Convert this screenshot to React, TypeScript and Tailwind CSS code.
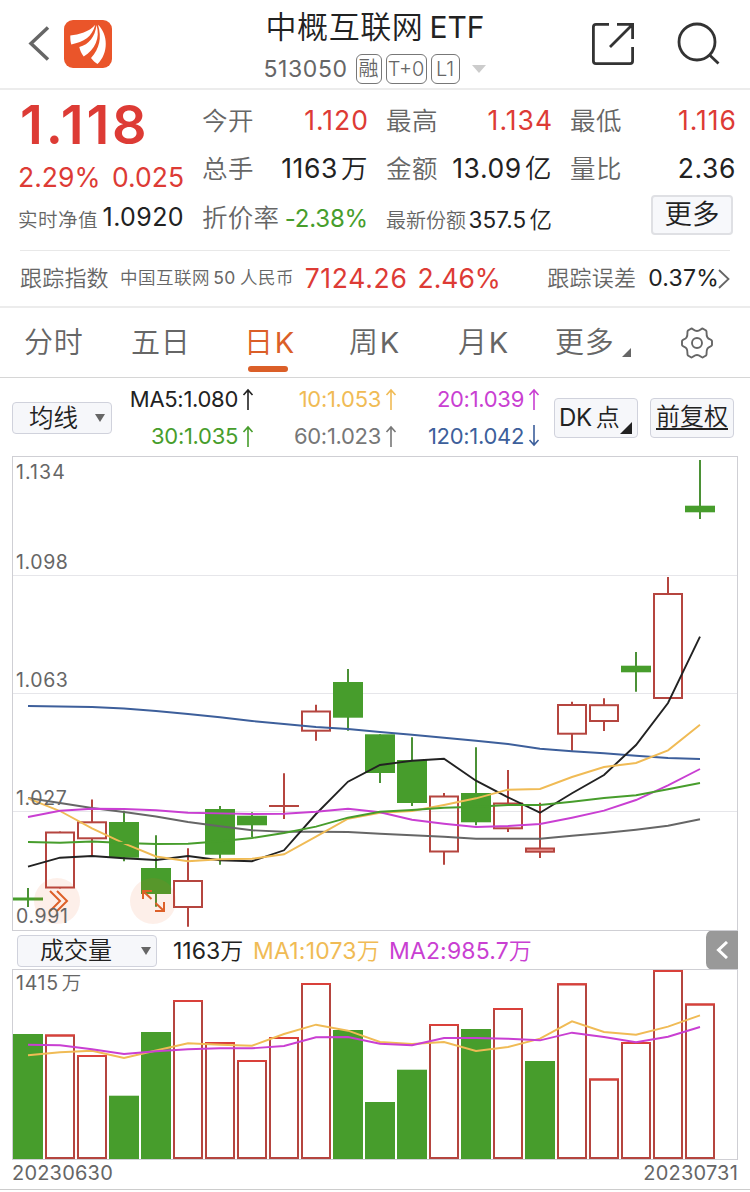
import type { ReactNode } from "react";
import clsx from "clsx";

const RED = "#b5453f";
const GREEN = "#479d2c";

const STEP = 32;
const FIRST_X = 28;
const BAR = 30;

const cx = (i: number) => FIRST_X + i * STEP;

type Candle = { up: boolean; high: number; top: number; bottom: number; low: number };

const k = (up: boolean, high: number, top: number, bottom: number, low: number): Candle => ({ up, high, top, bottom, low });

const candles: Candle[] = [
  k(false, 888, 897.5, 900.5, 907),
  k(true, 831.5, 831.5, 888.5, 888.5),
  k(true, 799.5, 821.3, 839.3, 856),
  k(false, 810.7, 822, 857.7, 861.3),
  k(false, 835.3, 868, 894, 906.7),
  k(true, 848.3, 880, 908, 926.7),
  k(false, 806, 809, 854.7, 864.7),
  k(false, 812.3, 815.7, 825.3, 837.3),
  k(true, 773.3, 805, 807, 819),
  k(true, 704.7, 710.5, 731.7, 740.7),
  k(false, 669, 682, 717.7, 730.7),
  k(false, 734.3, 734.3, 773, 783),
  k(false, 737.3, 760, 803, 806),
  k(true, 793, 795.5, 852.5, 864.7),
  k(false, 747.3, 793, 822.3, 825.3),
  k(true, 770, 802.5, 829.3, 832),
  k(true, 802.7, 847.5, 852.7, 858),
  k(true, 701.7, 704, 734.7, 750.7),
  k(true, 698.3, 704.2, 722, 731),
  k(false, 652, 665.7, 672.3, 691.7),
  k(true, 577, 593, 699, 699),
  k(false, 460, 505.7, 512.3, 519),
];

const averages = [
  { color: "#666666", ys: [798, 803, 808, 812, 816.5, 822, 826.3, 830.3, 831.7, 831.7, 832, 833.7, 835.3, 836.7, 838.7, 838.7, 838.7, 835.7, 833, 829.7, 825.7, 819.3] },
  { color: "#3d5f9b", ys: [706, 706.5, 707, 708.5, 711, 714, 717.3, 721, 724, 727, 729, 732, 734.7, 737.7, 740.7, 744, 748.7, 751.3, 753.3, 755.7, 758, 759] },
  { color: "#222222", ys: [866.7, 857.7, 856, 858.3, 860, 856, 860.3, 861.2, 850.3, 814, 781.7, 765, 760.7, 758.7, 780.7, 797.3, 812.7, 793.3, 775, 745, 703, 636.7] },
  { color: "#f0bb55", ys: [798.3, 811, 828.3, 843.3, 856.5, 861.3, 859.3, 858.8, 854.3, 836.7, 818.7, 812.7, 811, 805, 798.3, 789.7, 789, 777, 767, 763, 750.3, 724.7] },
  { color: "#c93fd2", ys: [817, 810.7, 808.7, 809, 810.3, 812.7, 813.4, 814, 813.7, 811.7, 808.7, 812.3, 819.7, 823.7, 827, 826, 824, 817.7, 810.7, 800, 785.3, 769] },
  { color: "#479d2c", ys: [842, 842.7, 841.5, 843, 844, 843.7, 841.3, 838, 833, 826.7, 817.7, 811.7, 810, 807.7, 806.7, 805, 805, 801.7, 798, 795.3, 789.3, 783] },
];

const volumes = [
  { up: false, top: 1034 }, { up: true, top: 1034.5 }, { up: true, top: 1055 }, { up: false, top: 1095.7 },
  { up: false, top: 1032 }, { up: true, top: 1000 }, { up: true, top: 1042 }, { up: true, top: 1060 },
  { up: true, top: 1037 }, { up: true, top: 983 }, { up: false, top: 1030 }, { up: false, top: 1102 },
  { up: false, top: 1069.7 }, { up: true, top: 1024 }, { up: false, top: 1029 }, { up: true, top: 1008 },
  { up: false, top: 1061 }, { up: true, top: 983.3 }, { up: true, top: 1078.5 }, { up: true, top: 1042 },
  { up: true, top: 970 }, { up: true, top: 1003.5 },
];

const volumeAverages = [
  { color: "#f0bb55", ys: [1055.3, 1052.3, 1050.7, 1058, 1050.5, 1043.3, 1044.7, 1045.7, 1034, 1024.7, 1030.7, 1042, 1044, 1042, 1051, 1047, 1038.7, 1021.3, 1032, 1034.7, 1026.7, 1015.3] },
  { color: "#c93fd2", ys: [1044.7, 1045.3, 1049.3, 1054, 1051.3, 1049.3, 1048.3, 1048.3, 1046, 1037.3, 1037, 1043.7, 1045.3, 1038, 1038, 1038.7, 1040.3, 1032.7, 1037, 1042.3, 1036.7, 1027] },
];

const Lines = ({ series }: { series: { color: string; ys: number[] }[] }) => (
  <>
    {series.map((s, n) => (
      <polyline key={n} fill="none" stroke={s.color} strokeWidth="1.9" points={s.ys.map((y, i) => `${cx(i)},${y}`).join(" ")} />
    ))}
  </>
);

const PriceChart = () => (
  <svg className="block h-[475px] w-[726px]" viewBox="12 456 726 475">
    <g stroke="#e6e6ea" strokeWidth="1">
      <line x1="13" x2="737" y1="575.5" y2="575.5" />
      <line x1="13" x2="737" y1="693.5" y2="693.5" />
      <line x1="13" x2="737" y1="811.5" y2="811.5" />
    </g>
    {candles.map((c, i) =>
      c.up ? (
        <g key={i} stroke={RED} strokeWidth="2">
          <line x1={cx(i)} x2={cx(i)} y1={c.high} y2={c.top + 1} />
          <line x1={cx(i)} x2={cx(i)} y1={c.bottom - 1} y2={c.low} />
          {c.bottom - c.top > 3 ? (
            <rect x={cx(i) - 14} y={c.top + 1} width={BAR - 2} height={c.bottom - c.top - 2} fill={c.bottom - c.top < 8 ? "#f6a5a0" : "none"} />
          ) : (
            <line x1={cx(i) - 15} x2={cx(i) + 15} y1={c.top + 1} y2={c.top + 1} />
          )}
        </g>
      ) : (
        <g key={i}>
          <line x1={cx(i)} x2={cx(i)} y1={c.high} y2={c.low} stroke="#4b9136" strokeWidth="2" />
          <rect x={cx(i) - 15} y={c.top} width={BAR} height={c.bottom - c.top} fill={GREEN} />
        </g>
      )
    )}
    <Lines series={averages} />
    <circle cx="57" cy="901" r="23" fill="#e8662c" fillOpacity="0.1" />
    <circle cx="153" cy="901" r="23" fill="#e8662c" fillOpacity="0.1" />
    <g fill="none" stroke="#dd6029" strokeWidth="2">
      <path d="M50 891l10 10-10 10M57 891l10 10-10 10" />
      <path d="M143 899v-8h9M143.500 891.500l8 7.500M164 902v9h-9M163.500 910.500l-8-7.500" />
    </g>
    <rect x="12.500" y="456.500" width="725" height="474" fill="none" stroke="#cfcfd4" />
  </svg>
);

const VolumeChart = () => (
  <svg className="block h-[191px] w-[726px]" viewBox="12 969 726 191">
    <rect x="12.500" y="969.500" width="725" height="190" fill="none" stroke="#cfcfd4" />
    {volumes.map((v, i) =>
      v.up ? (
        <rect key={i} x={cx(i) - 14} y={v.top + 1} width={BAR - 2} height={1158 - v.top - 1} fill="none" stroke={RED} strokeWidth="2" />
      ) : (
        <rect key={i} x={cx(i) - 15} y={v.top} width={BAR} height={1159 - v.top} fill={GREEN} />
      )
    )}
    {/* Brighter cap on rising bars */}
    {volumes.map((v, i) => v.up && <line key={i} x1={cx(i) - 15} x2={cx(i) + 15} y1={v.top + 1} y2={v.top + 1} stroke="#d9403a" strokeWidth="2" />)}
    <Lines series={volumeAverages} />
  </svg>
);

const Logo = () => (
  <svg className="h-12 w-12" viewBox="0 0 48 48">
    <rect width="48" height="48" rx="9" fill="#ea552a" />
    <g fill="#fff">
      <path d="M6.300 15.500C15 14.500 25 12 31.300 4.700C28 17 20 21.500 7.300 24.500C6.500 22 6.200 19 6.300 15.500Z" />
      <path d="M15.300 27C25 24.500 31 17 32.500 5C36.500 18 31 29.500 19.700 36.500C17.500 33.500 16 30.500 15.300 27Z" />
      <path d="M34 4.700C44 14 45 33 33.500 44C31 42.500 29 40.500 27 38C35.500 28.500 38 18 34 4.700Z" />
    </g>
  </svg>
);

const Cjk = ({ children, className }: { children: ReactNode; className?: string }) => (
  <span className={clsx("font-[350]", className)}>{children}</span>
);

const Stat = ({ label, value, className }: { label: string; value: ReactNode; className?: string }) => (
  <div className="flex h-12 items-center justify-between">
    <Cjk className="-ml-0.5 text-[25.500px] tracking-[0.600px] text-[#666]">{label}</Cjk>
    <span className={clsx("text-[26.500px] whitespace-nowrap", className)}>{value}</span>
  </div>
);

const Badge = ({ children, className }: { children: ReactNode; className: string }) => (
  <span className={clsx("flex h-[30px] items-center justify-center rounded-[6px] border border-[#777] text-[20px] leading-none font-[350]", className)}>{children}</span>
);

const Arrow = ({ down }: { down?: boolean }) => (
  <svg className={clsx("ml-1 h-[22px] w-3", down && "rotate-180")} viewBox="0 0 12 22" fill="none" stroke="currentColor" strokeWidth="1.600">
    <path d="M6 22V2M1.500 7L6 2l4.500 5" />
  </svg>
);

const MaItem = ({ text, className, down }: { text: string; className: string; down?: boolean }) => (
  <div className={clsx("flex h-[37px] items-center justify-end text-[22px] tracking-[-0.300px] whitespace-nowrap", className)}>
    {text}
    <Arrow down={down} />
  </div>
);

const tabs = [
  { label: "分时", className: "ml-6 w-[107px]" },
  { label: "五日", className: "w-[113px]" },
  { label: "日", k: true, active: true, className: "w-[105px]" },
  { label: "周", k: true, className: "w-[109px]" },
  { label: "月", k: true, className: "w-[97px]" },
  { label: "更多", className: "w-[126px]" },
];

export default function App() {
  return (
    <div className="h-[1192px] w-[750px] overflow-hidden bg-white font-['Inter','Noto_Sans_CJK_SC',sans-serif] text-[#222]">
      {/* Title bar */}
      <header className="flex h-[90px] justify-between border-b-2 border-[#ececec]">
        <div className="flex w-[250px] items-start pt-5 pl-7">
          <svg className="mt-1.5 mr-3.5 h-9 w-[22px]" viewBox="0 0 22 36" fill="none" stroke="#666" strokeWidth="3.500">
            <path d="M20 1.500L3 17.500L20 33.500" />
          </svg>
          <Logo />
        </div>
        <div className="flex w-[250px] flex-col items-center">
          <h1 className="flex h-[54px] items-center text-[30px] tracking-[0.600px] whitespace-nowrap">
            <Cjk className="text-[31px]">中概互联网</Cjk>
            <span className="ml-1.5 tracking-normal">ETF</span>
          </h1>
          <div className="flex h-[30px] items-center text-[#666]">
            <span className="mr-2 text-[23px] tracking-[0.600px]">513050</span>
            <Badge className="mr-1 w-[26px]">融</Badge>
            <Badge className="mr-1 w-[41px]">T+0</Badge>
            <Badge className="w-[29px]">L1</Badge>
            <span className="mr-px ml-3 border-x-[7px] border-t-[8px] border-x-transparent border-t-[#ccc]" />
          </div>
        </div>
        <div className="flex w-[250px] items-start justify-end gap-[42px] pt-[22px] pr-[29px]">
          <svg className="h-11 w-11" viewBox="0 0 44 44" fill="none" stroke="#333" strokeWidth="2.800">
            <path d="M18 2.400H5Q2.400 2.400 2.400 5V39Q2.400 41.600 5 41.600H39Q41.600 41.600 41.600 39V25M26 2.400H41.600V17M41 3L19 25" />
          </svg>
          <svg className="h-11 w-11" viewBox="0 0 44 44" fill="none" stroke="#333" strokeWidth="2.800">
            <circle cx="20" cy="20" r="18" />
            <path d="M32 32.500L41.500 41.500" />
          </svg>
        </div>
      </header>

      {/* Quote */}
      <section className="grid h-[160px] grid-cols-[165px_164px_164px_164px] gap-x-5 pt-[7px] pl-[19px]">
        <div className="-ml-px flex flex-col whitespace-nowrap">
          <div className="ml-0.5 h-[57px] text-[54px] leading-[56px] font-semibold tracking-[2.800px] text-[#dd3b35]">1.118</div>
          <div className="flex h-12 items-center justify-between text-[26.500px] text-[#dd3b35]">
            <span>2.29%</span>
            <span>0.025</span>
          </div>
          <div className="flex h-8 items-center justify-between">
            <Cjk className="mt-1.5 text-[19.500px] tracking-[0.500px] text-[#666]">实时净值</Cjk>
            <span className="text-[25px] tracking-[0.400px]">1.0920</span>
          </div>
        </div>
        <div>
          <Stat label="今开" value="1.120" className="-mr-px tracking-[1px] text-[#dd3b35]" />
          <Stat label="总手" value={<>1163<Cjk className="ml-[3px]">万</Cjk></>} className="tracking-[0.600px]" />
          <div className="flex h-12 items-center justify-between pt-0.5 whitespace-nowrap">
            <Cjk className="-ml-0.5 text-[25.500px] tracking-[0.300px] text-[#666]">折价率</Cjk>
            <span className="pt-0.5 text-[24px] tracking-[-0.200px] text-[#479d2c]">-2.38%</span>
          </div>
        </div>
        <div>
          <Stat label="最高" value="1.134" className="-mr-px tracking-[1px] text-[#dd3b35]" />
          <Stat label="金额" value={<>13.09<Cjk className="ml-[3px]">亿</Cjk></>} className="tracking-[0.600px]" />
          <div className="flex h-12 items-center justify-between pt-1.5 whitespace-nowrap">
            <Cjk className="-ml-0.5 pt-0.5 text-[20px] text-[#666]">最新份额</Cjk>
            <span className="text-[22.500px] tracking-[0.100px]">357.5<Cjk className="ml-[3px]">亿</Cjk></span>
          </div>
        </div>
        <div>
          <Stat label="最低" value="1.116" className="-mr-px tracking-[1px] text-[#dd3b35]" />
          <Stat label="量比" value="2.36" className="tracking-[0.600px]" />
          <button className="mt-[2px] ml-[79px] flex h-10 w-[82px] items-center justify-center rounded-[4px] border-2 border-[#dfe0e4] bg-[#f7f8fb] text-[27.500px] leading-none font-[350]">更多</button>
        </div>
      </section>

      {/* Tracked index */}
      <section className="mx-5 flex h-[56px] items-center border-t border-[#e8e8e8] whitespace-nowrap text-[#666]">
        <Cjk className="w-[100px] text-[22px] tracking-[0.200px]">跟踪指数</Cjk>
        <Cjk className="w-[185px] text-[17.500px] tracking-[0.550px]">
          中国互联网<span className="mr-1 ml-[3px] font-normal">50</span>人民币
        </Cjk>
        <span className="w-[113px] text-[26.500px] tracking-[0.700px] text-[#dd3b35]">7124.26</span>
        <span className="w-[130px] text-[26.500px] text-[#dd3b35]">2.46%</span>
        <Cjk className="w-[101px] text-[22px] tracking-[0.200px]">跟踪误差</Cjk>
        <span className="text-[23px] tracking-[0.200px] text-[#222]">0.37%</span>
        <svg className="-ml-px h-5 w-3 shrink-0" viewBox="0 0 12 20" fill="none" stroke="#666" strokeWidth="1.800">
          <path d="M1 1l9.500 9L1 19" />
        </svg>
      </section>

      {/* Period tabs */}
      <nav className="flex h-[72px] items-center border-t-2 border-b border-t-[#ececec] border-b-[#d6d6d6] text-[29px] text-[#666]">
        {tabs.map((t) => (
          <div key={t.label} className={clsx("relative flex h-full items-center tracking-[0.700px] whitespace-nowrap", t.active && "text-[#db5f28]", t.className)}>
            <Cjk>{t.label}</Cjk>
            {t.k && <span className="ml-px">K</span>}
            {t.active && <span className="absolute bottom-[5px] left-1 h-1.5 w-10 rounded-full bg-[#db5f28]" />}
            {t.label === "更多" && <span className="mt-5 ml-2 border-b-[9px] border-l-[9px] border-b-[#666] border-l-transparent" />}
          </div>
        ))}
        <svg className="h-8 w-8" viewBox="0 0 32 32" fill="none" stroke="#666" strokeWidth="1.900">
          <path d="M10.500 1.500C12 1.500 13 4 16 4S20 1.500 21.500 1.500L25 3.500C26.500 5 24.500 7 26.500 10.500C28 13 30.500 12 31 14V18C30.500 20 28 19 26.500 21.500C24.500 25 26.500 27 25 28.500L21.500 30.500C20 30.500 19 28 16 28S12 30.500 10.500 30.500L7 28.500C5.500 27 7.500 25 5.500 21.500C4 19 1.500 20 1 18V14C1.500 12 4 13 5.500 10.500C7.500 7 5.500 5 7 3.500Z" />
          <circle cx="16" cy="16" r="5" />
        </svg>
      </nav>

      {/* Moving averages */}
      <section className="flex h-[78px] items-center pl-3">
        <button className="mt-0.5 flex h-8 w-[100px] items-center justify-between rounded-[4px] border border-[#d0d2dc] bg-[#f6f7fa] pr-1.5 pl-4 text-[24.500px] leading-none">
          <Cjk>均线</Cjk>
          <span className="border-x-[5px] border-t-[8px] border-x-transparent border-t-[#666]" />
        </button>
        <div className="grid w-[430px] grid-cols-[142px_143px_143px] pt-px">
          <MaItem text="MA5:1.080" className="text-[#222]" />
          <MaItem text="10:1.053" className="text-[#f0bb55]" />
          <MaItem text="20:1.039" className="text-[#c93fd2]" />
          <MaItem text="30:1.035" className="text-[#479d2c]" />
          <MaItem text="60:1.023" className="text-[#777]" />
          <MaItem text="120:1.042" className="text-[#3d5f9b]" down />
        </div>
        <button className="relative mt-0.5 ml-3 flex h-10 w-[84px] items-center rounded-[4px] border border-[#d0d2dc] bg-[#f6f7fa] pl-1 text-[24px] leading-none tracking-[-0.300px] whitespace-nowrap">
          DK<Cjk className="ml-1">点</Cjk>
          <span className="absolute right-[5px] bottom-[3px] border-b-[12px] border-l-[12px] border-b-[#222] border-l-transparent" />
        </button>
        <button className="mt-0.5 ml-3 flex h-10 w-[84px] items-center justify-center rounded-[4px] border border-[#d0d2dc] bg-[#f6f7fa] text-[24px] leading-none">
          <Cjk className="border-b-2 border-[#222] leading-[22px]">前复权</Cjk>
        </button>
      </section>

      {/* Price chart with axis labels laid over it */}
      <section className="relative ml-3 h-[475px] w-[726px] text-[19.500px] leading-none tracking-[0.600px] text-[#666]">
        <PriceChart />
        <span className="absolute top-[7px] left-1 tracking-[1.100px]">1.134</span>
        <span className="absolute top-[97px] left-1">1.098</span>
        <span className="absolute top-[215px] left-1">1.063</span>
        <span className="absolute top-[333px] left-1">1.027</span>
        <span className="absolute top-[451px] left-1">0.991</span>
      </section>

      {/* Volume legend */}
      <section className="flex h-[38px] items-center pt-px pl-[17px] text-[23px] whitespace-nowrap">
        <button className="flex h-8 w-[140px] items-center justify-between rounded-[4px] border border-[#d0d2dc] bg-[#f6f7fa] pr-[5px] pl-[22px] text-[24px] leading-none">
          <Cjk>成交量</Cjk>
          <span className="border-x-[5px] border-t-[8px] border-x-transparent border-t-[#666]" />
        </button>
        <span className="mt-0.5 ml-4 w-[80px]">1163<Cjk>万</Cjk></span>
        <span className="mt-0.5 w-[136px] tracking-[0.200px] text-[#f0bb55]">MA1:1073<Cjk>万</Cjk></span>
        <span className="mt-0.5 tracking-[0.150px] text-[#c93fd2]">MA2:985.7<Cjk>万</Cjk></span>
        <button className="-mt-px mr-3 ml-auto flex h-10 w-8 shrink-0 items-center justify-center rounded-l-[7px] bg-[#999]">
          <svg className="h-[18px] w-3" viewBox="0 0 12 18" fill="none" stroke="#fff" strokeWidth="3">
            <path d="M11 1L2.500 9L11 17" />
          </svg>
        </button>
      </section>

      <section className="relative ml-3 h-[191px] w-[726px]">
        <VolumeChart />
        <span className="absolute top-1 left-1 text-[19.500px] leading-[20px] tracking-[0.700px] text-[#666]">1415<Cjk className="ml-[3px]">万</Cjk></span>
      </section>
      <footer className="flex h-[30px] items-center justify-between border-b border-[#ccc] px-3 pb-1 text-[20px] tracking-[0.200px] text-[#666]">
        <span>20230630</span>
        <span>20230731</span>
      </footer>
    </div>
  );
}
